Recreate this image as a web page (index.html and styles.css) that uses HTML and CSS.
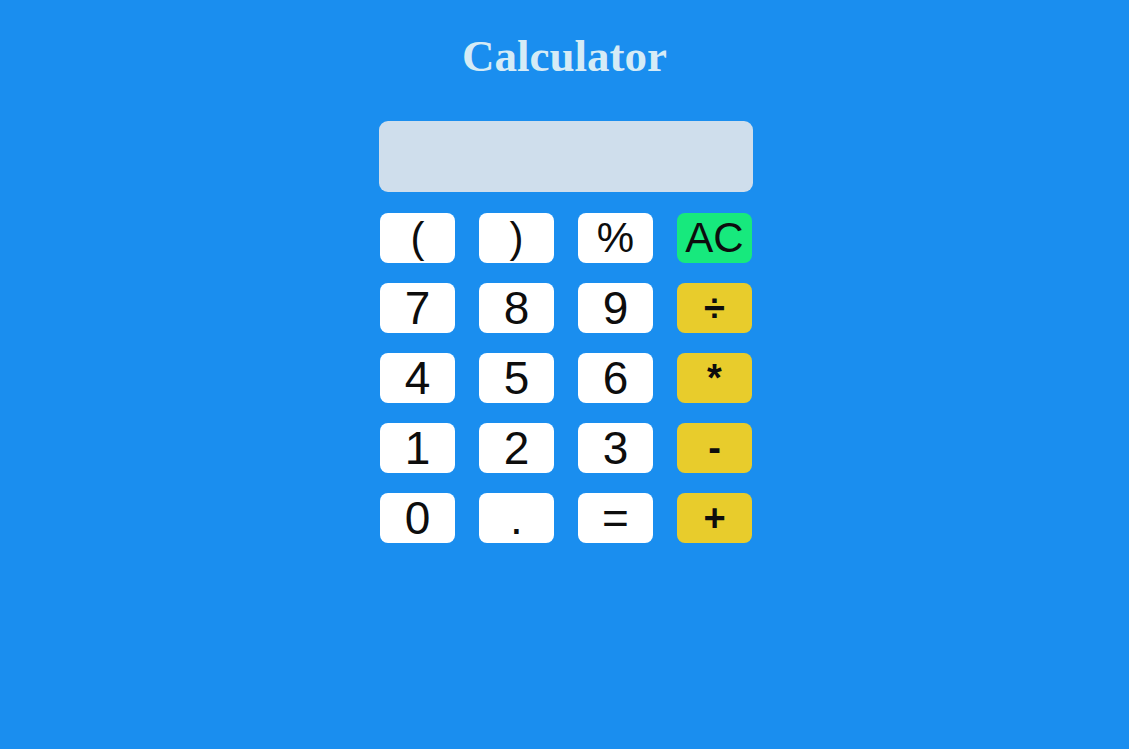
FILE: index.html
```html
<!DOCTYPE html>
<html>
<head>
<meta charset="utf-8">
<title>Calculator</title>
<link rel="stylesheet" href="styles.css">
</head>
<body>
<main class="page">
  <h1 class="title">Calculator</h1>
  <div class="calc">
    <div class="display"></div>
    <div class="keys">
      <button class="key key-small">(</button>
      <button class="key key-small">)</button>
      <button class="key key-small">%</button>
      <button class="key key-small key-clear">AC</button>
      <button class="key">7</button>
      <button class="key">8</button>
      <button class="key">9</button>
      <button class="key key-op">÷</button>
      <button class="key">4</button>
      <button class="key">5</button>
      <button class="key">6</button>
      <button class="key key-op">*</button>
      <button class="key">1</button>
      <button class="key">2</button>
      <button class="key">3</button>
      <button class="key key-op">-</button>
      <button class="key">0</button>
      <button class="key">.</button>
      <button class="key">=</button>
      <button class="key key-op">+</button>
    </div>
  </div>
</main>
</body>
</html>
```
FILE: styles.css
```css
html, body {
  margin: 0;
  padding: 0;
  height: 100%;
}
body {
  background: #1a8eef;
  font-family: "Liberation Sans", Arial, sans-serif;
}
.page {
  display: flex;
  flex-direction: column;
  align-items: center;
  padding-top: 34px;
}
.title {
  margin: 0 0 42px 0;
  font-family: "Liberation Serif", "Times New Roman", serif;
  font-weight: bold;
  font-size: 45px;
  line-height: 45px;
  color: #d5ebf6;
}
.calc {
  width: 374px;
  display: flex;
  flex-direction: column;
  gap: 21px;
  margin-left: 3px;
}
.display {
  height: 71px;
  background: #cfdeec;
  border-radius: 9px;
}
.keys {
  display: grid;
  grid-template-columns: repeat(4, 75px);
  grid-auto-rows: 50px;
  column-gap: 24px;
  row-gap: 20px;
  padding: 0 1px;
}
.key {
  border: none;
  margin: 0;
  padding: 0;
  background: #ffffff;
  border-radius: 8px;
  font-family: "Liberation Sans", Arial, sans-serif;
  font-size: 46px;
  line-height: 50px;
  color: #0d0d0d;
  overflow: hidden;
}
.key-small {
  font-size: 42px;
}
.key-clear {
  background: #17e97d;
}
.key-op {
  background: #e8cc2c;
  font-size: 38px;
  font-weight: bold;
}
```
